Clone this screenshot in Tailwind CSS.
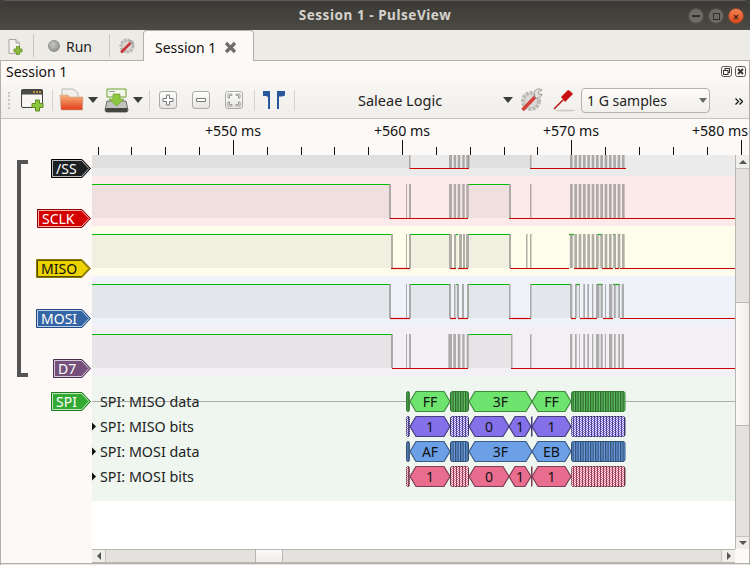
<!DOCTYPE html>
<html lang="en">
<head>
  <meta charset="UTF-8">
  <title>Session 1 - PulseView</title>
  <script src="https://cdn.jsdelivr.net/npm/@tailwindcss/browser@4"></script>
</head>
<body class="w-[750px] h-[565px] overflow-hidden flex flex-col bg-[#3c3b37] font-['Noto_Sans',sans-serif] text-[14px] text-[#111]">
  <!-- Title bar -->
  <div class="h-[30px] shrink-0 relative flex items-center justify-center rounded-t-[6px] bg-gradient-to-b from-[#3b3a36] to-[#4b4a44] border-t border-[#5c5b55]">
    <span class="font-bold text-[13.5px] tracking-[0.55px] text-[#d6d3cc]">Session 1 - PulseView</span>
    <div class="absolute right-[6px] top-[7px] flex gap-[4px]">
      <div class="w-[16px] h-[16px] rounded-full bg-[#6b6a64] border border-[#4c4b45] flex items-center justify-center"><div class="w-[8px] h-[1.5px] bg-[#2f2e2a]"></div></div>
      <div class="w-[16px] h-[16px] rounded-full bg-[#6b6a64] border border-[#4c4b45] flex items-center justify-center"><div class="w-[7px] h-[7px] border border-[#2f2e2a]"></div></div>
      <div class="w-[16px] h-[16px] rounded-full bg-gradient-to-b from-[#f08050] to-[#d9481c] border border-[#8d4a2c] flex items-center justify-center text-[#4a2010] text-[11px] leading-none font-bold">×</div>
    </div>
  </div>

  <!-- Tab bar -->
  <div class="h-[30px] shrink-0 flex bg-[#edebe6]">
    <div class="w-[33px] flex items-center justify-center pr-[4px] pt-[3px]">
      <svg width="18" height="18" viewBox="0 0 18 18"><path d="M3 1.500h7l3.500 3.500v10.500H3z" fill="#f4f2ee" stroke="#a9a7a2"/><path d="M10 1.500V5h3.500" fill="#dcdad5" stroke="#a9a7a2"/><path d="M10.500 8.500h3v2.500h2.500v3h-2.500v2.500h-3v-2.500h-2.500v-3h2.500z" fill="#8dbb3c" stroke="#5f8a1f" stroke-width=".8"/></svg>
    </div>
    <div class="w-px h-[23px] mt-[4px] bg-[#c9c6c1]"></div>
    <div class="w-[75px] flex items-center pl-[14px] gap-[6px] pt-[2px]">
      <div class="w-[12px] h-[12px] rounded-full bg-[radial-gradient(circle_at_40%_35%,#c8c8c6,#848482)] border border-[#8f8f8d]"></div>
      <span class="text-[14px] text-[#222]">Run</span>
    </div>
    <div class="w-px h-[23px] mt-[4px] bg-[#c9c6c1]"></div>
    <div class="w-[33px] flex items-center justify-center pt-[2px]">
      <svg width="18" height="18" viewBox="0 0 18 18"><circle cx="9" cy="9" r="6" fill="#d8d6d1" stroke="#b9b7b2" stroke-width="3" stroke-dasharray="2.500 1"/><path d="M3 15.500 13 5.500" stroke="#c9343a" stroke-width="2.500"/><path d="M12 3.500a3 3 0 0 1 3.500 3.500l-2-.5-1.500-1z" fill="#b9b7b2" stroke="#8e8c87" stroke-width=".6"/></svg>
    </div>
    <div class="w-[111px] h-[31px] relative z-10 bg-[#fdf9f6] border border-b-0 border-[#b3b0ab] rounded-t-[4px] flex items-center pl-[11px] pt-[2px]">
      <span class="text-[14px]">Session 1</span>
      <svg class="ml-[8px]" width="13" height="13" viewBox="0 0 13 13"><path d="M2 2l9 9M11 2l-9 9" stroke="#6d6d6a" stroke-width="3.200"/></svg>
    </div>
  </div>

  <!-- Session panel -->
  <div class="flex-1 min-h-0 flex flex-col bg-[#fdf9f6] border-t border-l border-r border-[#b3b0ab]">
    <!-- Dock title -->
    <div class="h-[21px] shrink-0 flex items-center pl-[5px] pr-[3px]">
      <span class="text-[14px] flex-1">Session 1</span>
      <svg class="mr-[3px]" width="11" height="11" viewBox="0 0 11 11"><rect x=".5" y=".5" width="10" height="10" rx="2" fill="none" stroke="#555"/><rect x="4" y="2.500" width="4.500" height="4" fill="none" stroke="#333"/><rect x="2.500" y="4.500" width="4.500" height="4" fill="#fdf9f6" stroke="#333"/></svg>
      <svg width="11" height="11" viewBox="0 0 11 11"><rect x=".5" y=".5" width="10" height="10" rx="2" fill="none" stroke="#555"/><path d="M3 3l5 5M8 3l-5 5" stroke="#333" stroke-width="1.800"/></svg>
    </div>

    <!-- Toolbar -->
    <div class="h-[37px] shrink-0 flex items-center border-b border-[#c6c3be] bg-gradient-to-b from-[#f9f7f3] to-[#f0eeea] relative">
      <div class="ml-[7px] w-[4px] h-[17px] border-l-2 border-dotted border-[#c7c4bf]"></div>
      <svg class="ml-[8px]" width="24" height="24" viewBox="0 0 24 24"><rect x="1.500" y="1.500" width="21" height="18" rx="1.500" fill="#f6f5f2" stroke="#3f3f3d"/><rect x="1.500" y="1.500" width="21" height="5" fill="#4a4a48"/><path d="M13 4h2M16 4h2M19 4h2" stroke="#e8a23a" stroke-width="1.500"/><path d="M15.500 12h4v3.500h3.500v4h-3.500v3.500h-4v-3.500h-3.500v-4h3.500z" fill="#8dc63f" stroke="#5f8a1f"/></svg>
      <div class="ml-[8px] w-px h-[21px] bg-[#d5d2cd]"></div>
      <svg class="ml-[6px]" width="25" height="24" viewBox="0 0 25 24"><defs><linearGradient id="folder" x1="0" y1="0" x2="0" y2="1"><stop offset="0" stop-color="#f7b27a"/><stop offset="1" stop-color="#e23c18"/></linearGradient></defs><path d="M3 1h11l5 4v7H3z" fill="#f2f0ec" stroke="#b9b6b0"/><path d="M1 7h8l2 2h13l-.5 13H2z" fill="url(#folder)" stroke="#c9a58e" stroke-width=".6"/></svg>
      <svg class="ml-[4px]" width="10" height="6" viewBox="0 0 10 6"><path d="M0 0h10L5 6z" fill="#3c3c3c"/></svg>
      <svg class="ml-[6px]" width="25" height="25" viewBox="0 0 25 25"><path d="M3 1h19v8H3z" fill="#f2f7ea" stroke="#6aa030"/><path d="M5 3.500h6" stroke="#9b9b9b"/><path d="M3 13 1 22q0 2 2 2h19q2 0 2-2l-2-9z" fill="#c2c2bc" stroke="#6d6d68"/><path d="M1.500 20h22v2.500q0 1.500-1.500 1.500H3q-1.500 0-1.500-1.500z" fill="#45453f"/><path d="M9 6h7v5h4l-7.500 7L5 11h4z" fill="#8dc63f" stroke="#6a9c26" stroke-width=".6"/></svg>
      <svg class="ml-[4px]" width="10" height="6" viewBox="0 0 10 6"><path d="M0 0h10L5 6z" fill="#3c3c3c"/></svg>
      <div class="ml-[6px] w-px h-[21px] bg-[#d5d2cd]"></div>
      <div class="ml-[9px] w-[18px] h-[18px] rounded-[3px] border border-[#aeaba6] bg-gradient-to-b from-white to-[#e6e4e0] flex items-center justify-center">
        <svg width="12" height="12" viewBox="0 0 12 12"><path d="M4.500 1h3v3.500H11v3H7.500V11h-3V7.500H1v-3h3.500z" fill="#fff" stroke="#777"/></svg>
      </div>
      <div class="ml-[15px] w-[18px] h-[18px] rounded-[3px] border border-[#aeaba6] bg-gradient-to-b from-white to-[#e6e4e0] flex items-center justify-center">
        <svg width="12" height="12" viewBox="0 0 12 12"><path d="M1.500 4.500h9v3h-9z" fill="#fff" stroke="#777"/></svg>
      </div>
      <div class="ml-[15px] w-[18px] h-[18px] rounded-[3px] border border-[#aeaba6] bg-gradient-to-b from-white to-[#e6e4e0] flex items-center justify-center">
        <svg width="14" height="14" viewBox="0 0 14 14"><path d="M1 5V1h4v1.500H2.500V5zM9 1h4v4h-1.500V2.500H9zM1 9h1.500v2.500H5V13H1zM11.500 9H13v4H9v-1.500h2.500z" fill="#fff" stroke="#777" stroke-width=".7"/></svg>
      </div>
      <div class="ml-[11px] w-px h-[21px] bg-[#d5d2cd]"></div>
      <svg class="ml-[8px]" width="23" height="20" viewBox="0 0 23 20"><path d="M0 1h7v18H5V7L3 6H0z" fill="#26589b"/><path d="M14 1h8v4.500l-3 1h-3V19h-2z" fill="#26589b"/></svg>
      <div class="ml-[8px] w-px h-[21px] bg-[#d5d2cd]"></div>
      <span class="ml-[63px] w-[145px] text-[14.5px] text-[#222] pt-[2px]">Saleae Logic</span>
      <svg width="10" height="6" viewBox="0 0 10 6"><path d="M0 0h10L5 6z" fill="#3c3c3c"/></svg>
      <svg class="ml-[7px]" width="24" height="24" viewBox="0 0 24 24"><circle cx="11" cy="13" r="8" fill="#dcdad6" stroke="#bdbbb6" stroke-width="4" stroke-dasharray="3 1"/><path d="M2.500 22 15 9" stroke="#d2403a" stroke-width="3.500"/><path d="M14 4.500a5 5 0 0 1 8-2.500l-3.500 2 .5 2.500 3-.5a5 5 0 0 1-6.500 4z" fill="#e2e0db" stroke="#8a8882" stroke-width=".8"/></svg>
      <svg class="ml-[9px]" width="22" height="24" viewBox="0 0 22 24"><path d="M1 21 10 12" stroke="#b8100f" stroke-width="1.500"/><path d="M8 9l7-7 2 1 3 3-8 8z" fill="#c7100f"/><ellipse cx="12" cy="22.500" rx="10" ry="1" fill="#cfcdc8"/></svg>
      <div class="ml-[6px] w-[129px] h-[25px] rounded-[4px] border border-[#b5b2ad] bg-gradient-to-b from-[#fdfcfa] to-[#f1efeb] flex items-center pl-[5px]">
        <span class="text-[14px] w-[112px] text-[#222] pt-[1px]">1 G samples</span>
        <svg width="8" height="5" viewBox="0 0 8 5"><path d="M0 0h8L4 5z" fill="#6b6b6b"/></svg>
      </div>
      <svg class="ml-[25px] mt-[3px]" width="8" height="7" viewBox="0 0 8 7"><path d="M.5.500l3 3-3 3M4.500.500l3 3-3 3" fill="none" stroke="#111" stroke-width="1.300"/></svg>
    </div>

    <!-- Ruler -->
    <svg id="ruler" class="shrink-0" width="748" height="36" viewBox="1 119 748 36"></svg>

    <!-- Traces -->
    <div class="h-[394px] shrink-0 flex">
      <svg id="gutter" class="shrink-0" width="91" height="394" viewBox="1 155 91 394"></svg>
      <svg id="view" class="shrink-0 bg-white" width="643" height="394" viewBox="92 155 643 394">
        <defs>
          <pattern id="dots" width="3" height="2" patternUnits="userSpaceOnUse"><rect width="1" height="2" fill="#000" opacity=".4"/><rect x="1" width="1" height="1" fill="#fff" opacity=".85"/><rect x="2" y="1" width="1" height="1" fill="#fff" opacity=".85"/></pattern>
          <pattern id="bars" width="2.500" height="4" patternUnits="userSpaceOnUse"><rect width="1.300" height="4" fill="#000" opacity=".5"/></pattern>
        </defs>
      </svg>
      <!-- Vertical scrollbar -->
      <div class="w-[14px] flex flex-col bg-[#e4e2de] border-l border-[#b9b6b1]">
        <div class="h-[14px] flex items-center justify-center border-b border-[#c6c3be] bg-[#f0eeea]"><svg width="8" height="4" viewBox="0 0 8 4"><path d="M0 4h8L4 0z" fill="#555"/></svg></div>
        <div class="h-[133px]"></div>
        <div class="h-[124px] bg-gradient-to-r from-[#fcfbf9] to-[#efedea] border-y border-[#b9b6b1]"></div>
        <div class="flex-1"></div>
        <div class="h-[13px] flex items-center justify-center border-t border-[#c6c3be] bg-[#f0eeea]"><svg width="8" height="4" viewBox="0 0 8 4"><path d="M0 0h8L4 4z" fill="#555"/></svg></div>
      </div>
    </div>

    <!-- Horizontal scrollbar -->
    <div class="h-[14px] shrink-0 flex">
      <div class="w-[91px]"></div>
      <div class="w-[643px] flex bg-[#e4e2de] border-y border-[#b9b6b1]">
        <div class="w-[14px] flex items-center justify-center border-r border-[#c6c3be] bg-[#f0eeea]"><svg width="4" height="8" viewBox="0 0 4 8"><path d="M4 0v8L0 4z" fill="#555"/></svg></div>
        <div class="w-[149px]"></div>
        <div class="w-[28px] bg-gradient-to-b from-[#fcfbf9] to-[#efedea] border-x border-[#b9b6b1]"></div>
        <div class="flex-1"></div>
        <div class="w-[14px] flex items-center justify-center border-l border-[#c6c3be] bg-[#f0eeea]"><svg width="4" height="8" viewBox="0 0 4 8"><path d="M0 0v8l4-4z" fill="#555"/></svg></div>
      </div>
    </div>
    <div class="h-[2px] bg-[#e6e4e0] border-t border-[#b3b0ab]"></div>
  </div>

  <script>
    const NS = 'http://www.w3.org/2000/svg';
    const FONT = '"Noto Sans", sans-serif';

    function add(parent, tag, attrs, text) {
      const el = document.createElementNS(NS, tag);
      for (const k in attrs) el.setAttribute(k, attrs[k]);
      if (text) el.textContent = text;
      parent.appendChild(el);
      return el;
    }

    // ruler
    const ruler = document.getElementById('ruler');
    for (let i = -4; i < 16; i++) {
      const x = Math.floor(233.4 + i * 33.84) + 0.5;
      const major = i % 5 === 0;
      add(ruler, 'line', { x1: x, x2: x, y1: major ? 140 : 147, y2: 155, stroke: '#111' });
    }
    [['+550 ms', 233], ['+560 ms', 402], ['+570 ms', 571], ['+580 ms', 720]].forEach(([t, x]) => {
      add(ruler, 'text', { x, y: 136, 'text-anchor': 'middle', 'font-family': FONT, 'font-size': 14.2, fill: '#111' }, t);
    });

    // gutter: group bracket and channel labels
    const gutter = document.getElementById('gutter');
    add(gutter, 'path', { d: 'M28 162H19V375H28', fill: 'none', stroke: '#555', 'stroke-width': 4 });
    const tags = [
      ['/SS', 51, 159, '#1c2022', '#000', '#fff', '#3a3f42'],
      ['SCLK', 37, 209, '#d40000', '#8f0000', '#fff', '#ee6060'],
      ['MISO', 36, 259, '#edd400', '#8a7a00', '#111', '#f8e878'],
      ['MOSI', 36, 309, '#3465a4', '#204a87', '#fff', '#7aa0d0'],
      ['D7', 53, 359, '#75507b', '#4b2f52', '#fff', '#a585aa'],
      ['SPI', 51, 392, '#33aa33', '#1d7a1d', '#fff', '#70d070']
    ];
    tags.forEach(([t, x, y, fill, stroke, inner]) => {
      const color = t === 'MISO' ? '#111' : '#fff';
      add(gutter, 'path', { d: `M${x + .5} ${y + .5}H82L90.500 ${y + 9.5}L82 ${y + 18.5}H${x + .5}Z`, fill, stroke });
      add(gutter, 'path', { d: `M${x + 1.5} ${y + 1.5}H81.500L89 ${y + 9.5}L81.500 ${y + 17.5}H${x + 1.5}Z`, fill: 'none', stroke: inner, 'stroke-width': .7 });
      add(gutter, 'text', { x: x + 5, y: y + 14.500, 'font-family': FONT, 'font-size': 14, fill: color }, t);
    });

    // traces
    const view = document.getElementById('view');
    const END = 735;
    const rows = [
      [155, 21, '#ebebeb'], [176, 50, '#fceaea'], [226, 50, '#fefdeb'],
      [276, 50, '#eff2f8'], [326, 50, '#f2f0f5'], [376, 125, '#eef6ef']
    ];
    rows.forEach(([y, h, fill]) => add(view, 'rect', { x: 92, y, width: 643, height: h, fill }));

    function burst(from, to, period, width) {
      const out = [];
      for (let x = from; x < to; x += period) out.push([x, width]);
      return out;
    }

    const B1 = [[449, 3], [453.7, 2.4], [457.7, 2.6], [462.3, 2.4], [466.3, 2.4]];
    const B2 = burst(570, 626, 4.33, 2.7);
    const B3 = [[570, 2.3], [575, 1.7], [579, .8], [583.3, 1.7], [587.3, 1.7], [592, 1.3], [596, 3.3], [600.7, 2], [605, 1], [609, 3.3], [614, 1.7], [618.3, 1.7], [621.7, 2.3]];

    const signals = [
      { top: 155, bot: 168, fill: '#e0e0e0', highs: [[92, 409.5], [469, 530]], pulses: [[409, 1.5], [468, 1.5], [530, 1.5], ...B1, ...B2.map(([x]) => [x, 2.6])] },
      { top: 184, bot: 218, fill: '#efdfdf', highs: [[92, 389.5], [468, 509]], pulses: [[389, 2], [406, 1], [409, 2], [509, 2], [530, 1.5], ...B1, ...B2] },
      { top: 234, bot: 268, fill: '#f1efe0', highs: [[92, 391], [410, 450], [456, 458], [468, 510], [569, 574], [598, 602], [613, 615], [619, 620]], pulses: [[391, 2], [406, 1], [409, 2], [449, 3], [454, 2], [459, 3], [463, 2], [466, 3], [509, 2], [526, 1.5], [530, 1.5], ...B2] },
      { top: 284, bot: 318, fill: '#e3e6eb', highs: [[92, 390], [410, 450], [456, 458], [468, 509], [531, 571], [576, 580], [597, 603], [613, 620]], pulses: [[389, 2], [406, 1], [409, 2], [449, 2], [454, 1.500], [457, 2], [462, 2], [467, 2], [509, 1.500], [530, 1.500], ...B3] },
      { top: 334, bot: 368, fill: '#e7e4e8', highs: [[92, 392], [468, 511]], pulses: [[391, 2], [406, 1], [409, 2], [448.3, 3.7], [453.3, 2.7], [457.7, 2.7], [462.3, 2.3], [466.7, 2], [511, 1.500], [530, 1.500], ...B3] }
    ];
    signals.forEach((s) => {
      s.highs.forEach(([a, b]) => {
        add(view, 'rect', { x: a, y: s.top, width: b - a, height: s.bot - s.top, fill: s.fill });
        if (s.top !== 155) add(view, 'line', { x1: a, x2: b, y1: s.top + .5, y2: s.top + .5, stroke: '#00bb00', 'stroke-width': 1.200 });
      });
      // low level runs between the highs
      let prev = s.highs[0][1];
      const lows = [];
      s.highs.slice(1).forEach(([a, b]) => { lows.push([prev, a]); prev = b; });
      lows.push([prev, s.top === 155 ? 626 : END]);
      lows.forEach(([a, b]) => add(view, 'line', { x1: a, x2: b, y1: s.bot + .5, y2: s.bot + .5, stroke: '#cc0000', 'stroke-width': 1.200 }));
      s.pulses.forEach(([x, w]) => add(view, 'rect', { x, y: s.top, width: w, height: s.bot - s.top, fill: '#8f8d8a', opacity: .7 }));
    });

    // decoder rows
    add(view, 'line', { x1: 92, x2: END, y1: 401.5, y2: 401.5, stroke: '#a9aca8' });
    const dec = [
      { y: 391, fill: '#5fc65f', stroke: '#3d8a3d', hex: '#6ee36e', pat: 'bars', name: 'SPI: MISO data', segs: [[410, 450, 'FF'], [469, 532, '3F'], [532, 571, 'FF']] },
      { y: 416, fill: '#8470e8', stroke: '#463c7e', hex: '#8470e8', pat: 'dots', name: 'SPI: MISO bits', segs: [[410, 450, '1'], [469, 509, '0'], [509, 531, '1'], [532, 571, '1']] },
      { y: 441, fill: '#6b9fe6', stroke: '#3b5b86', hex: '#6b9fe6', pat: 'bars', name: 'SPI: MOSI data', segs: [[410, 450, 'AF'], [469, 532, '3F'], [532, 571, 'EB']] },
      { y: 466, fill: '#e86d8e', stroke: '#7c3e56', hex: '#e86d8e', pat: 'dots', name: 'SPI: MOSI bits', segs: [[410, 450, '1'], [469, 509, '0'], [509, 531, '1'], [532, 571, '1']] }
    ];
    dec.forEach((d, i) => {
      const t = d.y + .5, b = d.y + 20.5, m = d.y + 10.5;
      add(view, 'text', { x: 100, y: d.y + 16, 'font-family': FONT, 'font-size': 14.3, fill: '#222' }, d.name);
      if (i > 0) add(view, 'path', { d: `M92 ${m - 4}L96 ${m}L92 ${m + 4}Z`, fill: '#111' });
      // compressed blocks
      [[406.5, 409.5], [450.5, 468.5], [571.5, 625]].forEach(([x0, x1]) => {
        add(view, 'rect', { x: x0, y: t, width: x1 - x0, height: 20, rx: 2, fill: d.fill, stroke: d.stroke });
        add(view, 'rect', { x: x0, y: t, width: x1 - x0, height: 20, rx: 2, fill: `url(#${d.pat})` });
      });
      d.segs.forEach(([x0, x1, text]) => {
        const e = 6;
        add(view, 'path', { d: `M${x0} ${m}L${x0 + e} ${t}H${x1 - e}L${x1} ${m}L${x1 - e} ${b}H${x0 + e}Z`, fill: d.hex, stroke: d.stroke, 'stroke-width': 1.200 });
        add(view, 'text', { x: (x0 + x1) / 2, y: m + 5, 'text-anchor': 'middle', 'font-family': FONT, 'font-size': 14, fill: '#111' }, text);
      });
      if (i % 2 === 1) add(view, 'rect', { x: 531, y: t, width: 1.500, height: 20, fill: d.stroke });
    });
  </script>
</body>
</html>
